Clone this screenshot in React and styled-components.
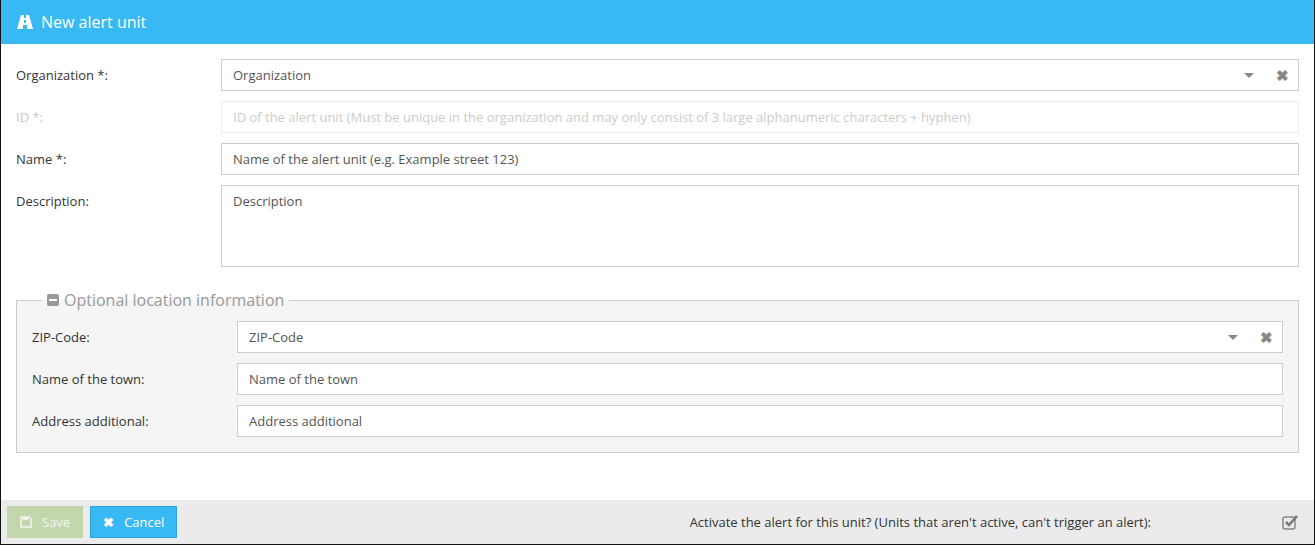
import React from "react";
import styled, { createGlobalStyle } from "styled-components";

const G = createGlobalStyle`
  html,body{margin:0;padding:0;background:#fff;}
  body{font-family:"Open Sans",sans-serif;font-size:13px;color:#333;}
  *{box-sizing:border-box;}
`;
const Frame = styled.div`
  width:1315px;height:545px;border:1px solid #111;border-top:none;display:flex;flex-direction:column;
`;
const Header = styled.div`
  height:44px;background:#38b9f3;color:#fff;display:flex;align-items:center;gap:8px;padding-left:16px;font-size:16px;flex-shrink:0;
`;
const Body = styled.div`
  flex:1;padding:15px 15px 0 15px;display:flex;flex-direction:column;gap:10px;
`;
const Row = styled.div`
  display:grid;grid-template-columns:${p => p.$label}px 1fr;align-items:start;
`;
const Label = styled.div`
  color:${p => (p.$muted ? "#c8c8c8" : "#333")};line-height:32px;
`;
const Input = styled.div`
  height:${p => p.$h || 32}px;border:1px solid ${p => (p.$muted ? "#eee" : "#ccc")};background:#fff;
  padding:${p => (p.$area ? "6px 11px" : "0 11px")};line-height:${p => (p.$area ? "18px" : "30px")};
  color:${p => (p.$muted ? "#ccc" : "#555")};display:flex;align-items:${p => (p.$area ? "flex-start" : "center")};
`;
const Grow = styled.span`flex:1;`;
const Caret = styled.span`
  width:0;height:0;border-left:5px solid transparent;border-right:5px solid transparent;border-top:5px solid #888;margin-right:22px;
`;
const X = styled.span`color:#888;font-weight:bold;font-size:15px;margin-right:-2px;`;
const Fieldset = styled.fieldset`
  margin:12px 0 0 0;border:1px solid #ccc;background:#f5f5f5;padding:10px 15px 15px 15px;
  display:flex;flex-direction:column;gap:10px;
`;
const Legend = styled.legend`
  color:#999;font-size:16px;padding:0 5px;margin-left:10px;display:flex;align-items:center;gap:5px;
  background:linear-gradient(#fff 50%, #f5f5f5 50%);
`;
const Minus = styled.span`
  width:12px;height:12px;background:#999;border-radius:2px;position:relative;display:inline-block;
  &::after{content:"";position:absolute;left:2px;right:2px;top:5px;height:2px;background:#fff;}
`;
const Footer = styled.div`
  height:44px;background:#ebebeb;display:flex;align-items:center;padding:0 6px;gap:7px;flex-shrink:0;
`;
const Btn = styled.div`
  height:32px;padding:0 12px;display:flex;align-items:center;gap:10px;color:#fff;
  background:${p => p.$bg};opacity:${p => p.$op || 1};border:1px solid ${p => p.$bd};
`;
const Active = styled.div`flex:1;text-align:right;padding-right:124px;`;

export default function App() {
  return (
    <>
      <G />
      <Frame>
        <Header>
          <svg width="16" height="14" viewBox="0 0 16 14"><path d="M4 0h3v3h2V0h3l4 14H10V10H6v4H0z M7 5h2v3H7z" fill="#fff" fillRule="evenodd" /></svg>
          New alert unit
        </Header>
        <Body>
          <Row $label={205}><Label>Organization *:</Label><Input><Grow>Organization</Grow><Caret /><X>✖</X></Input></Row>
          <Row $label={205}><Label $muted>ID *:</Label><Input $muted>ID of the alert unit (Must be unique in the organization and may only consist of 3 large alphanumeric characters + hyphen)</Input></Row>
          <Row $label={205}><Label>Name *:</Label><Input>Name of the alert unit (e.g. Example street 123)</Input></Row>
          <Row $label={205}><Label>Description:</Label><Input $area $h={82}>Description</Input></Row>
          <Fieldset>
            <Legend><Minus />Optional location information</Legend>
            <Row $label={205}><Label>ZIP-Code:</Label><Input><Grow>ZIP-Code</Grow><Caret /><X>✖</X></Input></Row>
            <Row $label={205}><Label>Name of the town:</Label><Input>Name of the town</Input></Row>
            <Row $label={205}><Label>Address additional:</Label><Input>Address additional</Input></Row>
          </Fieldset>
        </Body>
        <Footer>
          <Btn $bg="#9bc56c" $bd="#9bc56c" $op={0.5}>
            <svg width="12" height="12" viewBox="0 0 12 12"><path d="M1 1h8l2 2v8H1z" fill="none" stroke="#fff" strokeWidth="1.5" /><rect x="3" y="1" width="5" height="3" fill="#fff" /></svg>
            Save
          </Btn>
          <Btn $bg="#38b9f3" $bd="#2aa6de"><b>✖</b>Cancel</Btn>
          <Active>Activate the alert for this unit? (Units that aren't active, can't trigger an alert):</Active>
          <svg width="16" height="16" viewBox="0 0 16 16" style={{ marginRight: 10 }}><rect x="1" y="3" width="12" height="12" rx="2" fill="none" stroke="#888" strokeWidth="1.5" /><path d="M4 8l3 3 8-9" fill="none" stroke="#777" strokeWidth="2.5" /></svg>
        </Footer>
      </Frame>
    </>
  );
}
